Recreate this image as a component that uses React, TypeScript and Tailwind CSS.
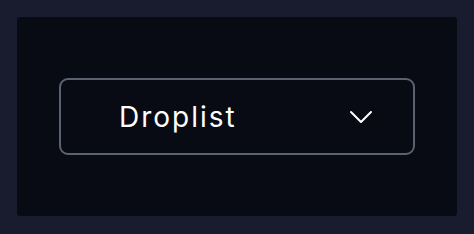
export default function App() {
  return (
    <div className="w-[474px] h-[234px] bg-[#181c2e] p-[17px] pb-[18px]">
      <div className="h-full w-full rounded-[3px] bg-[#080b13] flex items-center justify-center">
        <button
          type="button"
          className="w-[356px] h-[77px] rounded-[9px] border-2 border-[#5c6172] flex items-center justify-between pl-[58px] pr-[40px] text-white"
        >
          <span className="text-[28px] leading-none font-normal tracking-[2px] font-['Inter',sans-serif]">
            Droplist
          </span>
          <svg width="24" height="14" viewBox="0 0 24 14" fill="none">
            <path d="M2 2l10 10L22 2" stroke="#fff" strokeWidth="2" strokeLinecap="round" strokeLinejoin="round" />
          </svg>
        </button>
      </div>
    </div>
  );
}
